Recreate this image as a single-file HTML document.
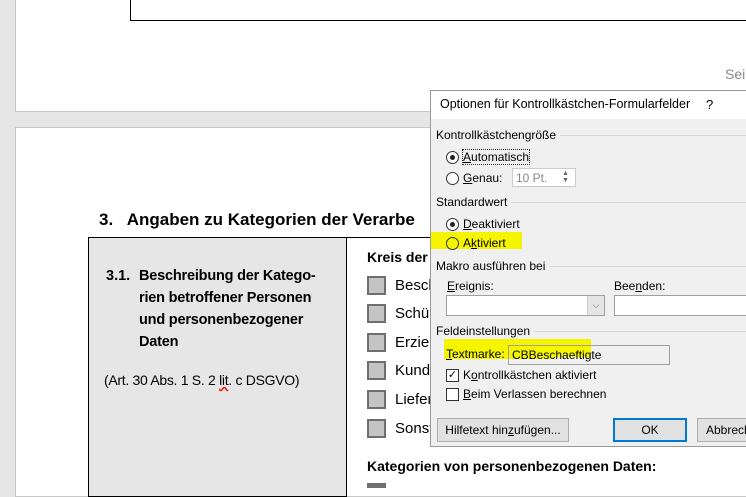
<!DOCTYPE html>
<html><head><meta charset="utf-8"><style>
*{margin:0;padding:0;box-sizing:border-box}
body{width:746px;height:486px;overflow:hidden;background:#e6e6e6;position:relative;font-family:"Liberation Sans",sans-serif}
.abs{position:absolute}
.page{background:#fff;border:1px solid #c8c8c8}
.dlg{font-size:12px;color:#000}
.cb{position:absolute;width:19px;height:19px;background:#c4c4c4;border:2px solid #6e6e6e}
.lbl{position:absolute;font-size:15px;left:395px}
.rad{position:absolute;width:13px;height:13px;border:1px solid #333;border-radius:50%;background:#fff}
.rad.on::after{content:"";position:absolute;left:3px;top:3px;width:5px;height:5px;border-radius:50%;background:#222}
.grp{position:absolute;font-size:12px;background:#f0f0f0;padding-right:4px}
.line{position:absolute;height:1px;background:#d8d8d8}
.inp{position:absolute;background:#fff;border:1px solid #a0a0a0}
.btn{position:absolute;border:1px solid #adadad;background:#e1e1e1;font-size:12px;text-align:center;line-height:22px}
u{text-decoration:underline}
</style></head><body>
<div class="abs page" style="left:15px;top:-2px;width:740px;height:114px"></div>
<div class="abs" style="left:130px;top:-2px;width:620px;height:23px;border:1px solid #000"></div>
<div class="abs" style="left:725px;top:66px;font-size:14px;color:#888">Sei</div>
<div class="abs page" style="left:15px;top:127px;width:740px;height:370px"></div>
<div class="abs" style="left:99px;top:210px;font-size:17px;font-weight:bold">3.&nbsp;&nbsp; Angaben zu Kategorien der Verarbe</div>
<div class="abs" style="left:88px;top:237px;width:259px;height:260px;background:#e6e6e6;border:1px solid #000"></div>
<div class="abs" style="left:346px;top:237px;width:100px;height:1px;background:#000"></div>
<div class="abs" style="left:106px;top:265px;font-size:14.5px;font-weight:bold;line-height:22px">3.1.</div>
<div class="abs" style="left:139px;top:265px;font-size:14.5px;font-weight:bold;line-height:22px;width:200px;letter-spacing:-0.2px">Beschreibung der Katego-<br>rien betroffener Personen<br>und personenbezogener<br>Daten</div>
<div class="abs" style="left:104px;top:372px;font-size:14px;letter-spacing:-0.3px">(Art. 30 Abs. 1 S. 2 <span style="text-decoration:underline wavy red">lit</span>. c DSGVO)</div>
<div class="abs" style="left:367px;top:249px;font-size:14px;font-weight:bold">Kreis der</div>
<div class="cb" style="left:367px;top:276px"></div><div class="lbl" style="top:277px">Besch</div>
<div class="cb" style="left:367px;top:304px"></div><div class="lbl" style="top:305px">Schül</div>
<div class="cb" style="left:367px;top:333px"></div><div class="lbl" style="top:334px">Erzieh</div>
<div class="cb" style="left:367px;top:361px"></div><div class="lbl" style="top:362px">Kund</div>
<div class="cb" style="left:367px;top:390px"></div><div class="lbl" style="top:391px">Liefer</div>
<div class="cb" style="left:367px;top:419px"></div><div class="lbl" style="top:420px">Sonst</div>
<div class="abs" style="left:367px;top:458px;font-size:14px;font-weight:bold">Kategorien von personenbezogenen Daten:</div>
<div class="abs" style="left:367px;top:483px;width:19px;height:5px;background:#6e6e6e"></div>

<div class="abs dlg" style="left:430px;top:90px;width:320px;height:357px;background:#f0f0f0;border:1px solid #999">
 <div class="abs" style="left:0;top:0;width:320px;height:28px;background:#fff"></div>
 <div class="abs" style="left:9px;top:6px;font-size:12.5px">Optionen für Kontrollkästchen-Formularfelder</div>
 <div class="abs" style="left:275px;top:6px;font-size:13px">?</div>
 <div class="line" style="left:5px;top:44px;width:320px"></div><div class="grp" style="left:5px;top:37px">Kontrollkästchengröße</div>
 <div class="rad on" style="left:15px;top:60px"></div><div class="abs" style="left:32px;top:59px;outline:1px dotted #333"><u>A</u>utomatisch</div>
 <div class="rad" style="left:15px;top:81px"></div><div class="abs" style="left:32px;top:80px"><u>G</u>enau:</div>
 <div class="inp" style="left:81px;top:77px;width:64px;height:19px;border-color:#ccc;color:#888;padding:2px 3px">10 Pt.</div>
 <div class="abs" style="left:131px;top:79px;font-size:7px;color:#666;line-height:7px">▲<br>▼</div>
 <div class="line" style="left:5px;top:111px;width:320px"></div><div class="grp" style="left:5px;top:104px">Standardwert</div>
 <div class="rad on" style="left:15px;top:127px"></div><div class="abs" style="left:32px;top:126px"><u>D</u>eaktiviert</div>
 <div class="abs" style="left:0;top:141px;width:91px;height:17px;background:#f5f500"></div>
 <div class="rad" style="left:15px;top:146px;background:#f5f500"></div><div class="abs" style="left:32px;top:145px">A<u>k</u>tiviert</div>
 <div class="line" style="left:5px;top:175px;width:320px"></div><div class="grp" style="left:5px;top:168px">Makro ausführen bei</div>
 <div class="abs" style="left:16px;top:188px"><u>E</u>reignis:</div>
 <div class="abs" style="left:183px;top:188px">Bee<u>n</u>den:</div>
 <div class="inp" style="left:15px;top:204px;width:159px;height:21px"></div>
 <div class="abs" style="left:156px;top:205px;width:17px;height:19px;background:#e5e5e5;border-left:1px solid #ccc;font-size:9px;text-align:center;line-height:19px;color:#555">⌵</div>
 <div class="inp" style="left:183px;top:204px;width:140px;height:21px"></div>
 <div class="line" style="left:5px;top:240px;width:320px"></div><div class="grp" style="left:5px;top:233px">Feldeinstellungen</div>
 <div class="abs" style="left:13px;top:248px;width:147px;height:18px;background:#f5f500"></div>
 <div class="abs" style="left:13px;top:258px;width:110px;height:10px;background:#f5f500"></div>
 <div class="inp" style="left:77px;top:254px;width:162px;height:20px;background:transparent;padding:2px 3px">CBBeschaeftigte</div>
 <div class="abs" style="left:15px;top:256px"><u>T</u>extmarke:</div>
 <div class="abs" style="left:15px;top:278px;width:13px;height:13px;border:1px solid #333;background:#fff;font-size:11px;line-height:11px;text-align:center">✓</div>
 <div class="abs" style="left:32px;top:277px">K<u>o</u>ntrollkästchen aktiviert</div>
 <div class="abs" style="left:15px;top:297px;width:13px;height:13px;border:1px solid #333;background:#fff"></div>
 <div class="abs" style="left:32px;top:296px"><u>B</u>eim Verlassen berechnen</div>
 <div class="btn" style="left:6px;top:327px;width:132px;height:24px">Hilfetext hin<u>z</u>ufügen...</div>
 <div class="btn" style="left:182px;top:327px;width:74px;height:24px;border:2px solid #0078d7;line-height:20px">OK</div>
 <div class="btn" style="left:266px;top:327px;width:74px;height:24px;text-align:left;padding-left:8px">Abbrech</div>
</div>
</body></html>
